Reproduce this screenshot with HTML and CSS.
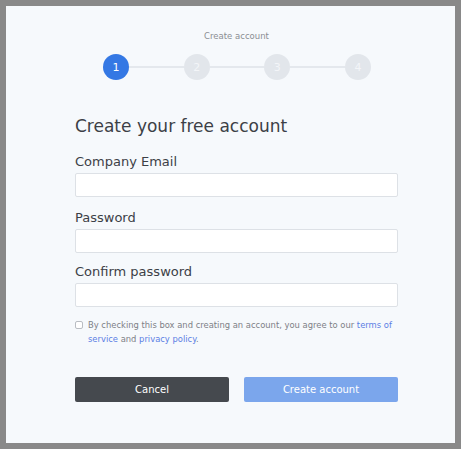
FILE: index.html
```html
<!DOCTYPE html>
<html>
<head>
<meta charset="utf-8">
<link rel="stylesheet" href="styles.css">
</head>
<body>
<div class="panel">
  <div class="content">
    <div class="kicker">Create account</div>
    <div class="stepper">
      <div class="step active">1</div>
      <div class="line"></div>
      <div class="step">2</div>
      <div class="line"></div>
      <div class="step">3</div>
      <div class="line"></div>
      <div class="step">4</div>
    </div>
    <h1 class="heading">Create your free account</h1>
    <div class="field">
      <label class="label">Company Email</label>
      <div class="input"></div>
    </div>
    <div class="field">
      <label class="label">Password</label>
      <div class="input"></div>
    </div>
    <div class="field">
      <label class="label">Confirm password</label>
      <div class="input"></div>
    </div>
    <div class="agree">
      <span class="box"></span>
      <p class="agree-text">By checking this box and creating an account, you agree to our <a class="link">terms of service</a> and <a class="link">privacy policy</a>.</p>
    </div>
    <div class="actions">
      <button class="btn cancel">Cancel</button>
      <button class="btn create">Create account</button>
    </div>
  </div>
</div>
</body>
</html>
```
FILE: styles.css
```css
html, body {
  margin: 0;
  padding: 0;
  background: #898989;
}
body {
  font-family: "DejaVu Sans", "Liberation Sans", sans-serif;
  padding: 6px;
}
.panel {
  width: 449px;
  height: 437px;
  background: #f6f9fc;
  box-sizing: border-box;
  padding: 0 57px 0 69px;
}
.content {
  display: flex;
  flex-direction: column;
}
.kicker {
  text-align: center;
  font-size: 8.5px;
  color: #8b8e93;
  padding-top: 24px;
  height: 12px;
  line-height: 12px;
}
.stepper {
  margin: 12px 27px 0 28px;
  display: flex;
  align-items: center;
}
.step {
  width: 26px;
  height: 26px;
  border-radius: 50%;
  background: #e2e6eb;
  color: #f3f5f8;
  font-size: 11px;
  display: flex;
  align-items: center;
  justify-content: center;
  flex: none;
}
.step.active {
  background: #3478e4;
  color: #fff;
}
.line {
  flex: 1;
  height: 2px;
  background: #e4e8ed;
}
.heading {
  margin: 35px 0 0;
  font-size: 17px;
  font-weight: 400;
  color: #3c4046;
  line-height: 22px;
  height: 22px;
}
.field {
  display: flex;
  flex-direction: column;
}
.label {
  margin-top: 16px;
  font-size: 13px;
  line-height: 18px;
  color: #3c4046;
  height: 18px;
}
.field + .field .label {
  margin-top: 12px;
}
.field + .field + .field .label {
  margin-top: 10px;
}
.input {
  margin-top: 2px;
  height: 24px;
  box-sizing: border-box;
  background: #fff;
  border: 1px solid #dde1e6;
  border-radius: 2px;
}
.agree {
  display: flex;
  align-items: flex-start;
  margin-top: 11px;
  gap: 5px;
}
.box {
  flex: none;
  box-sizing: border-box;
  width: 8px;
  height: 8px;
  border: 1px solid #b9bdc3;
  border-radius: 2px;
  background: #fff;
  margin-top: 3px;
}
.agree-text {
  margin: 0;
  font-size: 8.4px;
  line-height: 14px;
  color: #7d8086;
}
.link {
  color: #5b7ee4;
}
.actions {
  display: flex;
  justify-content: space-between;
  margin-top: 31px;
}
.btn {
  width: 154px;
  height: 25px;
  border: none;
  border-radius: 2px;
  color: #fff;
  font-family: inherit;
  font-size: 10px;
  padding: 0;
}
.cancel {
  background: #45494e;
}
.create {
  background: #7ba6ec;
}
```
